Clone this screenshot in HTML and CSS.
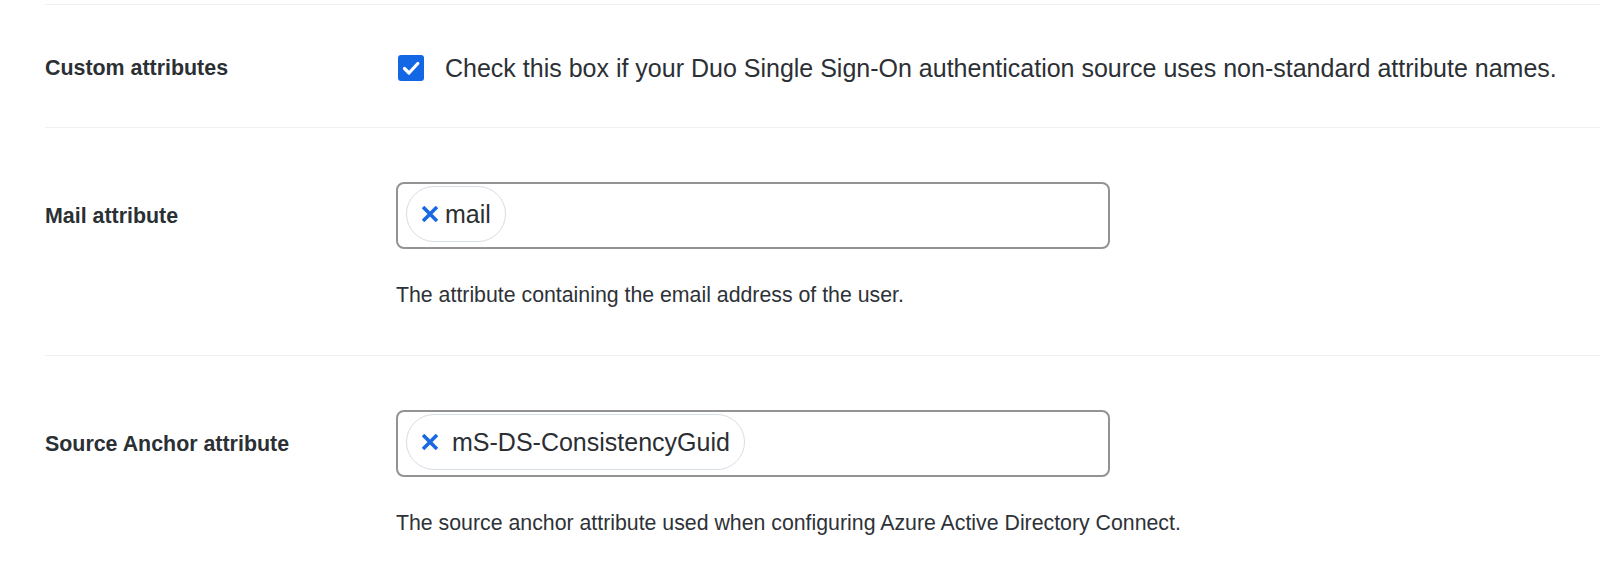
FILE: index.html
```html
<!DOCTYPE html>
<html lang="en">
<head>
<meta charset="utf-8">
<title>Custom attributes</title>
<link rel="stylesheet" href="styles.css">
</head>
<body>
<div class="form">
  <div class="row row-check">
    <div class="label">Custom attributes</div>
    <div class="control">
      <label class="check">
        <span class="box">
          <svg viewBox="0 0 26 26" width="26" height="26"><path d="M6.5 13.5 L11 18 L19.8 8.5" fill="none" stroke="#fff" stroke-width="3.2" stroke-linecap="round" stroke-linejoin="round"/></svg>
        </span>
        <span class="check-text">Check this box if your Duo Single Sign-On authentication source uses non-standard attribute names.</span>
      </label>
    </div>
  </div>
  <div class="row">
    <div class="label label-field">Mail attribute</div>
    <div class="control">
      <div class="input">
        <span class="chip">
          <svg class="x" viewBox="0 0 16 16" width="16" height="16"><path d="M2.3 2.3 L13.7 13.7 M13.7 2.3 L2.3 13.7" fill="none" stroke="#1a69e3" stroke-width="3.6" stroke-linecap="square"/></svg>
          <span class="chip-text">mail</span>
        </span>
      </div>
      <p class="help">The attribute containing the email address of the user.</p>
    </div>
  </div>
  <div class="row">
    <div class="label label-field">Source Anchor attribute</div>
    <div class="control">
      <div class="input">
        <span class="chip">
          <svg class="x" viewBox="0 0 16 16" width="16" height="16"><path d="M2.3 2.3 L13.7 13.7 M13.7 2.3 L2.3 13.7" fill="none" stroke="#1a69e3" stroke-width="3.6" stroke-linecap="square"/></svg>
          <span class="chip-text spaced">mS-DS-ConsistencyGuid</span>
        </span>
      </div>
      <p class="help">The source anchor attribute used when configuring Azure Active Directory Connect.</p>
    </div>
  </div>
</div>
</body>
</html>
```

FILE: styles.css
```css
html, body {
  margin: 0;
  padding: 0;
  background: #ffffff;
}

body {
  font-family: "Liberation Sans", Arial, Helvetica, sans-serif;
  color: #2c3035;
}

.form {
  margin-top: 4px;
  padding-left: 45px;
}

.row {
  display: flex;
  border-top: 1px solid #f0f0f0;
  padding: 54px 0 45px 0;
}

.row-check {
  height: 26px;
  padding: 50px 0 46px 0;
  align-items: center;
}

.label {
  width: 351px;
  flex: none;
  font-size: 21.4px;
  font-weight: bold;
  color: #2a3034;
  line-height: 26px;
}

.label-field {
  height: 67px;
  display: flex;
  align-items: center;
}

.control {
  display: flex;
  flex-direction: column;
}

.check {
  display: flex;
  align-items: center;
  margin-left: 2px;
}

.box {
  width: 26px;
  height: 26px;
  border-radius: 3px;
  background: #1467e4;
  display: flex;
  flex: none;
}

.check-text {
  margin-left: 21px;
  font-size: 25px;
  line-height: 26px;
  color: #2c3035;
}

.input {
  box-sizing: border-box;
  width: 714px;
  height: 67px;
  border: 2px solid #939393;
  border-radius: 8px;
  padding: 2px 8px;
  display: flex;
  align-items: flex-start;
}

.chip {
  box-sizing: border-box;
  height: 56px;
  display: inline-flex;
  align-items: center;
  border: 1.5px solid #d7dde5;
  border-radius: 28px;
  padding: 0 14px 0 15px;
  background: #fff;
}

.x {
  flex: none;
  margin-right: 7px;
}

.chip-text {
  font-size: 25px;
  line-height: 30px;
  color: #2b2f33;
}

.chip-text.spaced {
  margin-left: 7px;
}

.help {
  margin: 31px 0 0 0;
  font-size: 21.3px;
  line-height: 30px;
  color: #2e3237;
}
```
